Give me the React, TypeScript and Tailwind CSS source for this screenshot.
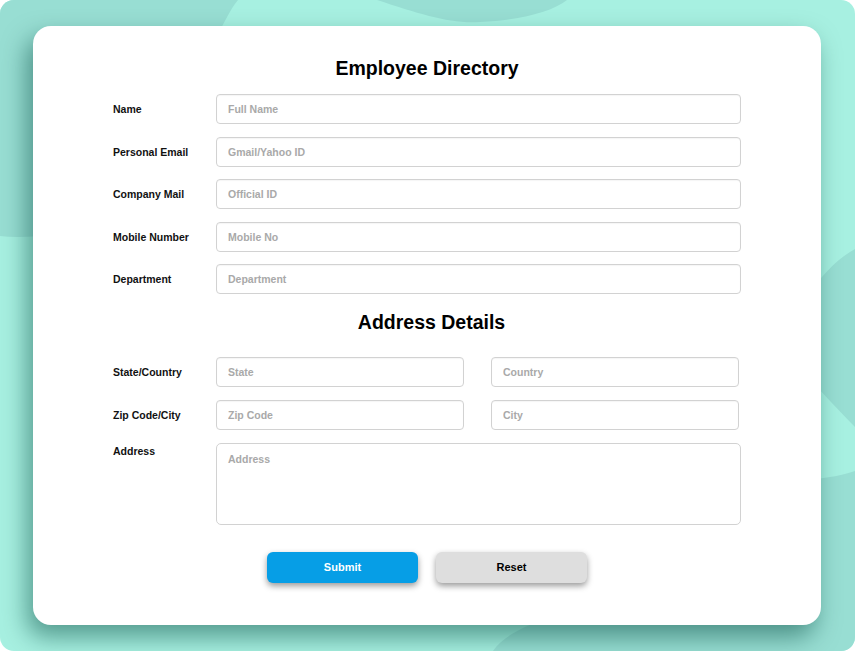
import React from "react";

const font = { fontFamily: '"Liberation Sans", Arial, sans-serif' };

const inputCls =
  "h-[30px] w-full rounded-[4px] border border-[#d2d2d2] bg-white px-[11px] text-[10.5px] font-bold text-[#333] outline-none shadow-[inset_0_1px_1px_rgba(0,0,0,0.04)] placeholder:text-[#a9a9a9] placeholder:font-bold";

function Row({ label, placeholder }: { label: string; placeholder: string }) {
  return (
    <div className="flex items-center">
      <label className="w-[103px] shrink-0 text-[10.5px] font-bold leading-[12px] text-[#111]">{label}</label>
      <input className={inputCls} placeholder={placeholder} />
    </div>
  );
}

function SplitRow({ label, left, right }: { label: string; left: string; right: string }) {
  return (
    <div className="flex items-center">
      <label className="w-[103px] shrink-0 text-[10.5px] font-bold leading-[12px] text-[#111]">{label}</label>
      <div className="flex gap-[27px]">
        <input className={`${inputCls} !w-[248px]`} placeholder={left} />
        <input className={`${inputCls} !w-[248px]`} placeholder={right} />
      </div>
    </div>
  );
}

export default function App() {
  return (
    <div className="h-[651px] w-full bg-white" style={font}>
      <div className="relative h-full w-full overflow-hidden rounded-[14px] bg-[#a7f0e1]">
        {/* background blobs */}
        <svg className="absolute inset-0 h-full w-full" viewBox="0 0 855 651" preserveAspectRatio="none">
          <path d="M0 0 H238 C205 40 170 200 40 236 Q15 238 0 236 Z" fill="#98ded3" />
          <path d="M377 0 C420 14 450 24 480 22 C520 20 552 12 567 0 Z" fill="#98ded3" />
          <path d="M855 249 C830 262 800 300 780 340 C800 370 815 385 855 427 Z" fill="#98ded3" />
          <path d="M855 471 C830 480 800 480 780 478 L780 560 C640 600 520 610 493 651 H855 Z" fill="#98ded3" />
        </svg>

        <div className="relative pl-[33px] pr-[34px] pt-[26px]">
          <div className="h-[599px] rounded-[18px] bg-white px-[80px] pt-[31px] shadow-[-6px_12px_24px_rgba(0,70,60,0.5)]">
            <h1 className="text-center text-[19.5px] font-bold leading-[22px] text-black">Employee Directory</h1>

            <div className="mt-[15px] flex flex-col gap-[12.5px]">
              <Row label="Name" placeholder="Full Name" />
              <Row label="Personal Email" placeholder="Gmail/Yahoo ID" />
              <Row label="Company Mail" placeholder="Official ID" />
              <Row label="Mobile Number" placeholder="Mobile No" />
              <Row label="Department" placeholder="Department" />
            </div>

            <h2 className="mt-[17px] pl-[9px] text-center text-[19.5px] font-bold leading-[22px] text-black">Address Details</h2>

            <div className="mt-[24px] flex flex-col gap-[13px]">
              <SplitRow label="State/Country" left="State" right="Country" />
              <SplitRow label="Zip Code/City" left="Zip Code" right="City" />
              <div className="flex items-start">
                <label className="w-[103px] shrink-0 pt-[2px] text-[10.5px] font-bold leading-[12px] text-[#111]">Address</label>
                <textarea
                  className="h-[82px] w-full resize-none rounded-[5px] border border-[#d2d2d2] bg-white px-[11px] pt-[9px] text-[10.5px] font-bold leading-[12px] text-[#333] outline-none placeholder:text-[#a9a9a9] placeholder:font-bold"
                  placeholder="Address"
                />
              </div>
            </div>

            <div className="mt-[27px] flex justify-center gap-[18px]">
              <button className="h-[31px] w-[151px] rounded-[6px] bg-[#069ee6] text-[11px] font-bold text-white shadow-[0_3px_6px_rgba(0,0,0,0.4)]">
                Submit
              </button>
              <button className="h-[31px] w-[151px] rounded-[6px] bg-[#dedede] text-[11px] font-bold text-black shadow-[0_3px_6px_rgba(0,0,0,0.4)]">
                Reset
              </button>
            </div>
          </div>
        </div>
      </div>
    </div>
  );
}
